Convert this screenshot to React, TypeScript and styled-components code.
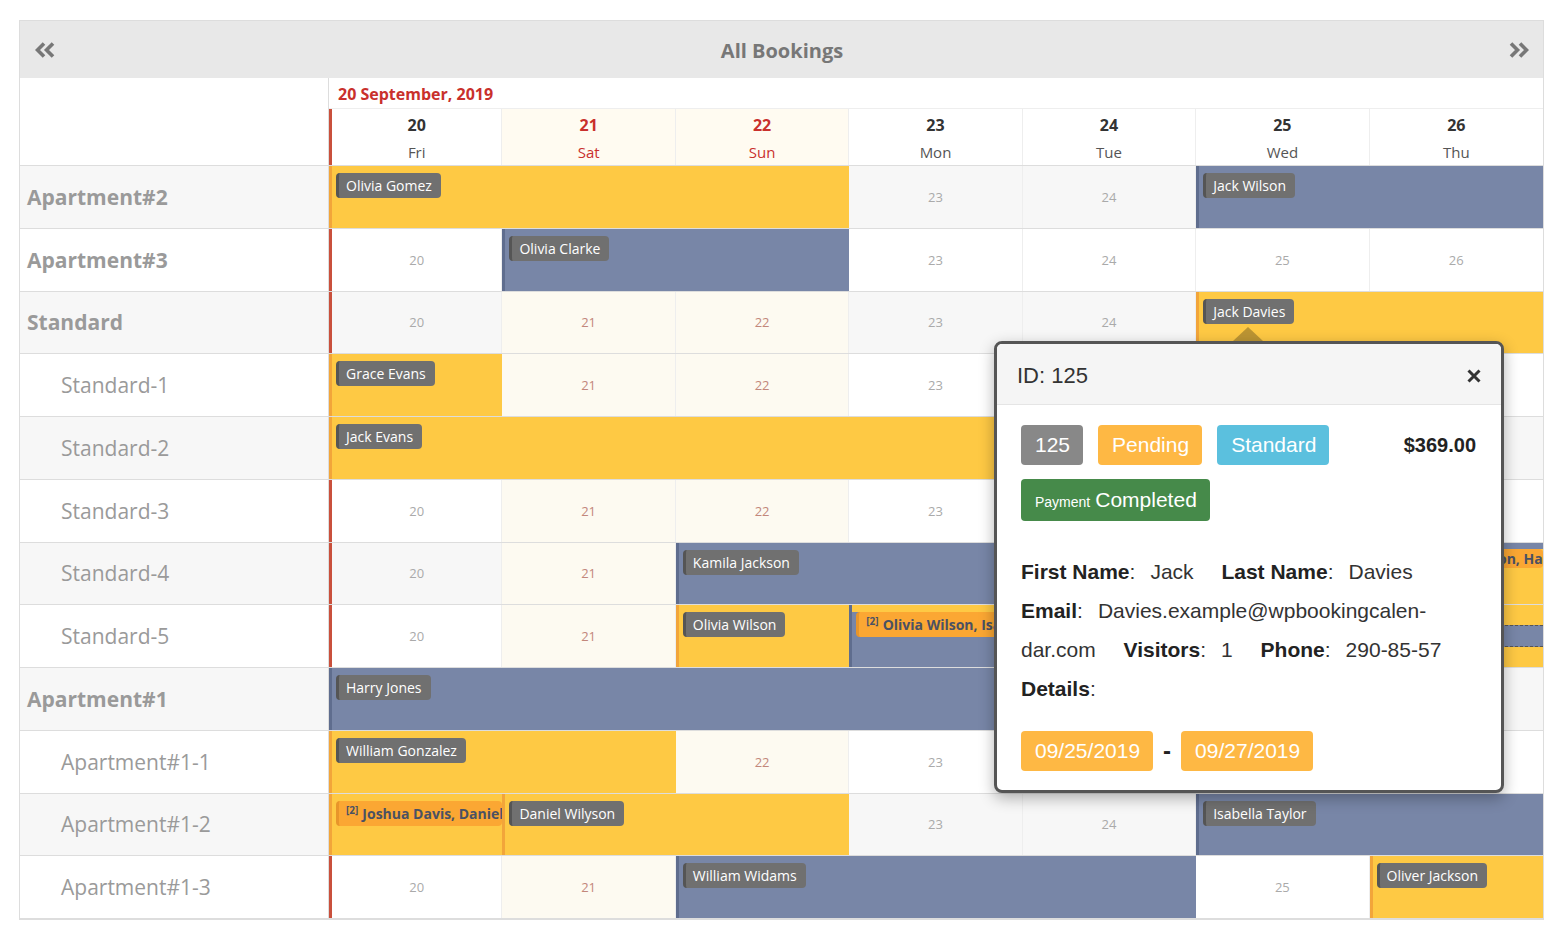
import React from "react";
import styled, { createGlobalStyle, css } from "styled-components";

const GlobalStyle = createGlobalStyle`
  * { box-sizing: border-box; }
  body {
    margin: 0;
    background: #fff;
    font-family: "Open Sans", "Liberation Sans", sans-serif;
  }
`;

const YELLOW = "#fec944";
const BLUE = "#7886a7";

type Tone = "yellow" | "blue" | "split" | "inset";

const tones: Record<Tone, { bg: string; edge: string }> = {
  yellow: { bg: YELLOW, edge: "#f2a53a" },
  blue: { bg: BLUE, edge: "#5f6d8e" },
  split: { bg: `linear-gradient(${YELLOW} 0 7px, ${BLUE} 7px)`, edge: "#5f6d8e" },
  inset: { bg: YELLOW, edge: YELLOW },
};

interface IBooking {
  start: number;
  span: number;
  tone: Tone;
  label?: string;
  multi?: string;
  front?: boolean;
}

interface IResource {
  name: string;
  group?: boolean;
  bookings: IBooking[];
  stripesAt?: number;
}

const days = [
  { n: 20, name: "Fri" },
  { n: 21, name: "Sat", weekend: true },
  { n: 22, name: "Sun", weekend: true },
  { n: 23, name: "Mon" },
  { n: 24, name: "Tue" },
  { n: 25, name: "Wed" },
  { n: 26, name: "Thu" },
];

const resources: IResource[] = [
  {
    name: "Apartment#2",
    group: true,
    bookings: [
      { start: 0, span: 3, tone: "yellow", label: "Olivia Gomez" },
      { start: 5, span: 2, tone: "blue", label: "Jack Wilson" },
    ],
  },
  {
    name: "Apartment#3",
    group: true,
    bookings: [{ start: 1, span: 2, tone: "blue", label: "Olivia Clarke" }],
  },
  {
    name: "Standard",
    group: true,
    bookings: [{ start: 5, span: 2, tone: "yellow", label: "Jack Davies" }],
  },
  { name: "Standard-1", bookings: [{ start: 0, span: 1, tone: "yellow", label: "Grace Evans" }] },
  { name: "Standard-2", bookings: [{ start: 0, span: 5, tone: "yellow", label: "Jack Evans" }] },
  { name: "Standard-3", bookings: [] },
  {
    name: "Standard-4",
    bookings: [
      { start: 2, span: 5, tone: "blue", label: "Kamila Jackson" },
      { start: 6, span: 1, tone: "inset", multi: "Kamila Jackson, Harry Jones" },
    ],
  },
  {
    name: "Standard-5",
    stripesAt: 6,
    bookings: [
      { start: 2, span: 1, tone: "yellow", label: "Olivia Wilson" },
      { start: 3, span: 4, tone: "split", multi: "Olivia Wilson, Isabella Taylor" },
    ],
  },
  {
    name: "Apartment#1",
    group: true,
    bookings: [{ start: 0, span: 4, tone: "blue", label: "Harry Jones" }],
  },
  { name: "Apartment#1-1", bookings: [{ start: 0, span: 2, tone: "yellow", label: "William Gonzalez" }] },
  {
    name: "Apartment#1-2",
    bookings: [
      { start: 0, span: 1, tone: "yellow", multi: "Joshua Davis, Daniel Wilyson", front: true },
      { start: 1, span: 2, tone: "yellow", label: "Daniel Wilyson" },
      { start: 5, span: 2, tone: "blue", label: "Isabella Taylor" },
    ],
  },
  {
    name: "Apartment#1-3",
    bookings: [
      { start: 2, span: 3, tone: "blue", label: "William Widams" },
      { start: 6, span: 1, tone: "yellow", label: "Oliver Jackson" },
    ],
  },
];

const Page = styled.div`
  padding: 20px 0 0 19px;
`;

const Board = styled.div`
  position: relative;
  width: 1525px;
  border: 1px solid #ddd;
`;

const TopBar = styled.div`
  height: 57px;
  background: #e8e8e8;
  display: flex;
  align-items: center;
  justify-content: space-between;
  padding: 0 14px 0 15px;
`;

const Title = styled.div`
  font-size: 20px;
  font-weight: 700;
  color: #777;
  padding-top: 2px;
`;

const NavButton = styled.button`
  display: flex;
  padding: 0;
  border: 0;
  background: none;
  cursor: pointer;
`;

const Header = styled.div`
  display: grid;
  grid-template-columns: 309px repeat(7, 1fr);
  grid-template-rows: 31px 56px;
  border-bottom: 1px solid #ddd;
`;

const Corner = styled.div`
  grid-row: 1 / 3;
  grid-column: 1;
  border-right: 1px solid #ddd;
`;

const MonthCell = styled.div`
  grid-row: 1;
  grid-column: 2 / -1;
  border-bottom: 1px solid #eee;
  padding: 1px 0 0 9px;
  line-height: 30px;
  font-size: 16px;
  font-weight: 700;
  color: #c9302c;
`;

const DayHead = styled.div<{ $weekend?: boolean; $today?: boolean }>`
  grid-row: 2;
  display: flex;
  flex-direction: column;
  align-items: center;
  padding-top: 6px;
  background: ${(p) => (p.$weekend ? "#fffbf1" : "#fff")};
  border-right: 1px solid #eee;
  border-left: ${(p) => (p.$today ? "3px solid #c9503c" : "0")};
  color: ${(p) => (p.$weekend ? "#c9302c" : "#333")};
  &:last-child {
    border-right: 0;
  }
`;

const DayNum = styled.div`
  font-size: 16px;
  font-weight: 700;
  line-height: 20px;
`;

const DayName = styled.div<{ $weekend?: boolean }>`
  margin-top: 7px;
  font-size: 15px;
  line-height: 20px;
  color: ${(p) => (p.$weekend ? "#c9302c" : "#555")};
`;

const Row = styled.div<{ $striped: boolean }>`
  display: grid;
  grid-template-columns: 309px repeat(7, 1fr);
  height: 62.75px;
  border-bottom: 1px solid #ddd;
  background: ${(p) => (p.$striped ? "#f7f7f7" : "#fff")};
  &:last-child {
    border-bottom: 0;
  }
`;

const ResLabel = styled.div<{ $group?: boolean }>`
  grid-row: 1;
  grid-column: 1;
  display: flex;
  align-items: center;
  padding-left: ${(p) => (p.$group ? "7px" : "41px")};
  border-right: 1px solid #ddd;
  font-size: 21px;
  font-weight: ${(p) => (p.$group ? 700 : 400)};
  color: #9a9a9a;
`;

const DayCell = styled.div<{ $col: number; $weekend?: boolean }>`
  grid-row: 1;
  grid-column: ${(p) => p.$col + 2};
  display: flex;
  align-items: center;
  justify-content: center;
  font-size: 13px;
  color: ${(p) => (p.$weekend ? "#c2877b" : "#aaa")};
  background: ${(p) => (p.$weekend ? "#fdfaf1" : "transparent")};
  border-right: ${(p) => (p.$col < 6 ? "1px solid #eee" : "0")};
  border-left: ${(p) => (p.$col === 0 ? "3px solid #c9503c" : "0")};
`;

const Bar = styled.div<{ $start: number; $span: number; $tone: Tone; $front?: boolean }>`
  grid-row: 1;
  grid-column: ${(p) => p.$start + 2} / span ${(p) => p.$span};
  z-index: ${(p) => (p.$front ? 3 : 1)};
  display: flex;
  align-items: flex-start;
  min-width: 0;
  padding: 7px 0 0 4px;
  overflow: ${(p) => (p.$front ? "visible" : "hidden")};
  background: ${(p) => tones[p.$tone].bg};
  border-left: 3px solid ${(p) => tones[p.$tone].edge};
  ${(p) =>
    p.$tone === "inset" &&
    css`
      z-index: 2;
      margin-top: 6px;
      padding: 0 0 0 11px;
    `}
`;

const Chip = styled.span`
  display: inline-block;
  height: 25px;
  line-height: 25px;
  padding: 0 9px 0 7px;
  border-left: 3px solid #555;
  border-radius: 4px;
  background: #707070;
  color: #fff;
  font-size: 14px;
  white-space: nowrap;
`;

const MultiChip = styled(Chip)<{ $small?: boolean; $clip?: boolean }>`
  overflow: hidden;
  background: #fba733;
  border-left-color: #e8952a;
  color: #4a5163;
  font-weight: 700;
  max-width: ${(p) => (p.$clip ? "174px" : "none")};
  ${(p) =>
    p.$small &&
    css`
      height: 19px;
      line-height: 19px;
    `}
`;

const Sup = styled.sup`
  font-size: 10px;
  margin-right: 4px;
  vertical-align: 5px;
  line-height: 0;
`;

const Stripes = styled.div<{ $col: number }>`
  grid-row: 1;
  grid-column: ${(p) => p.$col + 2};
  z-index: 2;
  display: flex;
  flex-direction: column;
`;

const Stripe = styled.div<{ $tone: "yellow" | "blue" }>`
  flex: 1;
  background: ${(p) => (p.$tone === "yellow" ? YELLOW : BLUE)};
  ${(p) =>
    p.$tone === "blue" &&
    css`
      border-top: 1px dashed #555;
      border-bottom: 1px dashed #555;
    `}
`;

/* popup */
const Popup = styled.div`
  position: absolute;
  left: 974px;
  top: 320px;
  z-index: 10;
  width: 510px;
  height: 452px;
  border: 3px solid #555;
  border-radius: 8px;
  background: #fff;
  box-shadow: 0 5px 15px rgba(0, 0, 0, 0.3);
  font-family: "Liberation Sans", Arial, sans-serif;
  color: #333;
  &::before {
    content: "";
    position: absolute;
    left: 236px;
    top: -17px;
    border-left: 15px solid transparent;
    border-right: 15px solid transparent;
    border-bottom: 14px solid rgba(60, 50, 20, 0.35);
  }
`;

const PopupHeader = styled.div`
  height: 61px;
  display: flex;
  align-items: center;
  justify-content: space-between;
  padding: 4px 20px 0 20px;
  background: #f5f5f5;
  border-bottom: 1px solid #e5e5e5;
  border-radius: 5px 5px 0 0;
  font-size: 22px;
`;

const CloseButton = styled.button`
  display: flex;
  padding: 0;
  border: 0;
  background: none;
  cursor: pointer;
`;

const PopupBody = styled.div`
  padding: 20px 25px 0 24px;
`;

const BadgeRow = styled.div`
  display: flex;
  align-items: center;
  gap: 15px;
`;

const Badge = styled.span<{ $color: string; $tall?: boolean }>`
  display: inline-flex;
  align-items: center;
  gap: 5px;
  height: ${(p) => (p.$tall ? "42px" : "40px")};
  padding: 0 13px 0 14px;
  border-radius: 4px;
  background: ${(p) => p.$color};
  color: #fff;
  font-size: 21px;
`;

const Small = styled.span`
  font-size: 14px;
  padding-top: 3px;
`;

const Price = styled.span`
  margin-left: auto;
  font-size: 20px;
  font-weight: 700;
  color: #222;
`;

const PaymentRow = styled.div`
  margin-top: 14px;
`;

const Info = styled.div`
  margin-top: 31px;
  font-size: 21px;
  line-height: 39px;
  color: #333;
  padding-right: 2px;
`;

const Field = styled.span<{ $spaced?: boolean }>`
  font-weight: 700;
  color: #222;
  margin-left: ${(p) => (p.$spaced ? "22px" : "0")};
`;

const Value = styled.span`
  margin-left: 15px;
`;

const DateRow = styled.div`
  display: flex;
  align-items: center;
  margin-top: 23px;
`;

const Dash = styled.span`
  margin: 0 10px;
  font-size: 24px;
  font-weight: 700;
  color: #222;
`;

const DoubleChevron: React.FC<{ dir: "left" | "right" }> = ({ dir }) => (
  <svg width="21" height="16" viewBox="0 0 21 16" style={dir === "right" ? { transform: "scaleX(-1)" } : undefined}>
    <path d="M9 1.5 L2.5 8 L9 14.5" fill="none" stroke="#777" strokeWidth="3.6" />
    <path d="M18 1.5 L11.5 8 L18 14.5" fill="none" stroke="#777" strokeWidth="3.6" />
  </svg>
);

const App: React.FC = () => {
  return (
    <>
      <GlobalStyle />
      <Page>
        <Board>
          <TopBar>
            <NavButton aria-label="previous">
              <DoubleChevron dir="left" />
            </NavButton>
            <Title>All Bookings</Title>
            <NavButton aria-label="next">
              <DoubleChevron dir="right" />
            </NavButton>
          </TopBar>

          <Header>
            <Corner />
            <MonthCell>20 September, 2019</MonthCell>
            {days.map((d, i) => (
              <DayHead key={d.n} $weekend={d.weekend} $today={i === 0}>
                <DayNum>{d.n}</DayNum>
                <DayName $weekend={d.weekend}>{d.name}</DayName>
              </DayHead>
            ))}
          </Header>

          {resources.map((r, ri) => (
            <Row key={r.name} $striped={ri % 2 === 0}>
              <ResLabel $group={r.group}>{r.name}</ResLabel>
              {days.map((d, i) => (
                <DayCell key={d.n} $col={i} $weekend={d.weekend}>
                  {d.n}
                </DayCell>
              ))}
              {r.bookings.map((b, bi) => (
                <Bar key={bi} $start={b.start} $span={b.span} $tone={b.tone} $front={b.front}>
                  {b.label && <Chip>{b.label}</Chip>}
                  {b.multi && (
                    <MultiChip $small={b.tone === "inset"} $clip={b.front}>
                      <Sup>[2]</Sup>
                      {b.multi}
                    </MultiChip>
                  )}
                </Bar>
              ))}
              {r.stripesAt !== undefined && (
                <Stripes $col={r.stripesAt}>
                  <Stripe $tone="yellow" />
                  <Stripe $tone="blue" />
                  <Stripe $tone="yellow" />
                </Stripes>
              )}
            </Row>
          ))}

          {/* booking details popover */}
          <Popup>
            <PopupHeader>
              <span>ID: 125</span>
              <CloseButton aria-label="close">
                <svg width="14" height="14" viewBox="0 0 14 14">
                  <path d="M1.5 1.5 L12.5 12.5 M12.5 1.5 L1.5 12.5" stroke="#333" strokeWidth="3" />
                </svg>
              </CloseButton>
            </PopupHeader>
            <PopupBody>
              <BadgeRow>
                <Badge $color="#888">125</Badge>
                <Badge $color="#feb844">Pending</Badge>
                <Badge $color="#5bc0de">Standard</Badge>
                <Price>$369.00</Price>
              </BadgeRow>
              <PaymentRow>
                <Badge $color="#468a4a" $tall>
                  <Small>Payment</Small> Completed
                </Badge>
              </PaymentRow>
              <Info>
                <Field>First Name</Field>:<Value>Jack</Value> <Field $spaced>Last Name</Field>:<Value>Davies</Value>
                <br />
                <Field>Email</Field>:<Value>Davies.example@wpbookingcalen{"\u00AD"}dar.com</Value>{" "}
                <Field $spaced>Visitors</Field>:<Value>1</Value> <Field $spaced>Phone</Field>:<Value>290-85-57</Value>
                <br />
                <Field>Details</Field>:
              </Info>
              <DateRow>
                <Badge $color="#feb844">09/25/2019</Badge>
                <Dash>-</Dash>
                <Badge $color="#feb844">09/27/2019</Badge>
              </DateRow>
            </PopupBody>
          </Popup>
        </Board>
      </Page>
    </>
  );
};

export default App;
